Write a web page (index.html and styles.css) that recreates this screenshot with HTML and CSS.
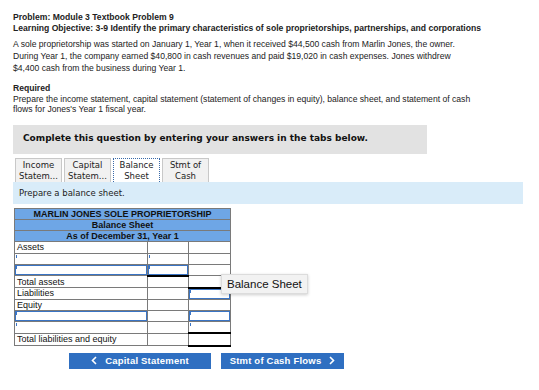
FILE: index.html
```html
<!DOCTYPE html>
<html lang="en">
<head>
    <meta charset="UTF-8">
    <title>Module 3 Textbook Problem 9</title>
    <link rel="stylesheet" href="styles.css">
</head>
<body>
<div class="page">
    <p class="title">Problem: Module 3 Textbook Problem 9<br>Learning Objective: 3-9 Identify the primary characteristics of sole proprietorships, partnerships, and corporations</p>
    <p class="intro">A sole proprietorship was started on January 1, Year 1, when it received $44,500 cash from Marlin Jones, the owner. During Year 1, the company earned $40,800 in cash revenues and paid $19,020 in cash expenses. Jones withdrew $4,400 cash from the business during Year 1.</p>
    <p class="req"><strong>Required</strong><br>Prepare the income statement, capital statement (statement of changes in equity), balance sheet, and statement of cash flows for Jones's Year 1 fiscal year.</p>

    <div class="instr">Complete this question by entering your answers in the tabs below.</div>

    <!-- answer tabs -->
    <div class="tabs">
        <div class="tab">Income<br>Statem...</div>
        <div class="tab">Capital<br>Statem...</div>
        <div class="tab active">Balance<br>Sheet</div>
        <div class="tab">Stmt of<br>Cash</div>
    </div>
    <div class="tab-bar">Prepare a balance sheet.</div>

    <div class="sheet-wrap">
        <table class="sheet">
            <colgroup><col class="c1"><col class="c2"><col class="c3"></colgroup>
            <tr class="head"><th colspan="3">MARLIN JONES SOLE PROPRIETORSHIP</th></tr>
            <tr class="head"><th colspan="3">Balance Sheet</th></tr>
            <tr class="head"><th colspan="3">As of December 31, Year 1</th></tr>
            <tr><td>Assets</td><td></td><td></td></tr>
            <tr><td class="in"></td><td class="in"></td><td></td></tr>
            <tr><td class="in box"></td><td class="in box"></td><td></td></tr>
            <tr><td>Total assets</td><td class="sum"></td><td></td></tr>
            <tr><td>Liabilities</td><td></td><td class="in box sum"></td></tr>
            <tr><td>Equity</td><td></td><td></td></tr>
            <tr><td class="in box"></td><td></td><td class="in box"></td></tr>
            <tr><td class="in"></td><td></td><td class="in"></td></tr>
            <tr><td>Total liabilities and equity</td><td></td><td class="total"></td></tr>
        </table>
        <div class="tooltip">Balance Sheet</div>
    </div>

    <div class="nav">
        <button class="nav-btn prev">
            <svg width="6" height="9" viewBox="0 0 6 9"><path d="M5 1 L1.5 4.5 L5 8" fill="none" stroke="#fff" stroke-width="1.6"/></svg>
            Capital Statement
        </button>
        <button class="nav-btn next">
            Stmt of Cash Flows
            <svg width="6" height="9" viewBox="0 0 6 9"><path d="M1 1 L4.5 4.5 L1 8" fill="none" stroke="#fff" stroke-width="1.6"/></svg>
        </button>
    </div>
</div>
</body>
</html>
```

FILE: styles.css
```css
body { margin: 0; background: #fff; color: #222; font-family: "Liberation Sans", Arial, sans-serif; }
.page { padding: 12px 13px 0 13px; }

.title { margin: 0; max-width: 470px; font-size: 8.6px; line-height: 11px; font-weight: bold; }
.intro { margin: 4px 0 0; max-width: 458px; font-size: 8.6px; line-height: 12px; }
.req { margin: 9px 0 0; max-width: 475px; font-size: 8.6px; line-height: 10.5px; }

.instr { margin-top: 10px; width: 394px; padding: 8px 10px 10px; background: #e2e2e2; font-family: "DejaVu Sans", Verdana, sans-serif; font-size: 9px; line-height: 11px; font-weight: bold; color: #111; }

.tabs { display: flex; gap: 2px; margin-top: 4px; padding-left: 2px; }
.tab { width: 45px; height: 22px; padding-top: 1px; border: 1px solid #c8c8c8; border-bottom: none; background: #f1f1f1; text-align: center; font-family: "DejaVu Sans", Verdana, sans-serif; font-size: 8.5px; line-height: 11px; color: #222; }
.tab.active { background: #fff; border: 1px dotted #3a6aa8; border-bottom: none; }
.tab-bar { width: 504px; height: 22px; padding-left: 6px; background: #d9ecf9; font-family: "DejaVu Sans", Verdana, sans-serif; font-size: 8.5px; line-height: 22px; color: #222; }

.sheet-wrap { position: relative; margin-top: 4px; padding-left: 1px; }
.sheet { border-collapse: collapse; font-size: 9px; color: #111; }
.c1 { width: 133px; }
.c2 { width: 41px; }
.c3 { width: 42px; }
.sheet th, .sheet td { border: 1px solid #7a7a7a; padding: 0 2px; line-height: 10px; }
.sheet th { height: 10.3px; background: #6ea6e6; font-weight: bold; text-align: center; }
.sheet td { height: 10.2px; background: #fff; text-align: left; }
.sheet td.in { background: linear-gradient(#3a74c4, #3a74c4) 1px 1px / 1px 3px no-repeat, #fff; }
.sheet td.box { box-shadow: inset 0 0 0 1px #3a74c4; }
.sheet td.sum { border-top: 2px solid #000; }
.sheet td.total { border-top: 2px solid #000; border-bottom: 2px solid #000; }

.tooltip { position: absolute; left: 208px; top: 66px; padding: 3px 5px; background: #f2f2f2; border: 1px solid #dcdcdc; box-shadow: 0 1px 3px rgba(0,0,0,0.2); font-size: 11.5px; line-height: 12px; color: #111; white-space: nowrap; }

.nav { display: flex; gap: 10px; margin-top: 6px; padding-left: 56px; }
.nav-btn { display: flex; align-items: center; justify-content: center; gap: 8px; height: 16px; padding: 0; border: none; background: #2f6fc1; color: #fff; font-family: "Liberation Sans", Arial, sans-serif; font-size: 9.5px; letter-spacing: 0.2px; font-weight: bold; cursor: pointer; }
.nav-btn.prev { width: 142px; }
.nav-btn.next { width: 123px; }
```
